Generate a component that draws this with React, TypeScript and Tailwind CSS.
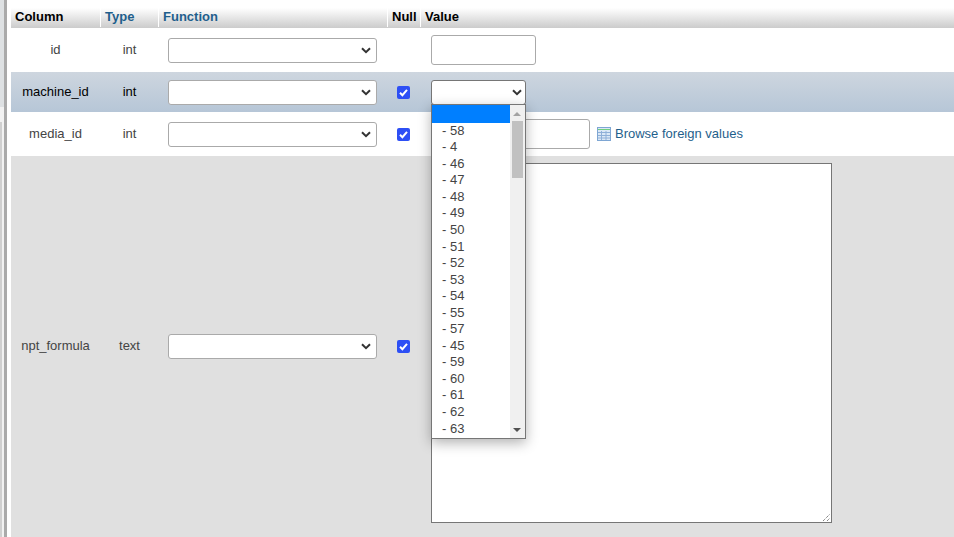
import React from "react";

const fn = "h-[25px] w-[209px] rounded-[3px] border border-[#aaaaaa] bg-white";

function Chevron({ className }: { className: string }) {
  return (
    <svg viewBox="0 0 10 7" className={className}>
      <path d="M1 1.2 5 5.2 9 1.2" fill="none" stroke="#333" strokeWidth="2" />
    </svg>
  );
}

function FakeSelect() {
  return (
    <div className={fn + " flex items-center justify-end pr-[5px]"}>
      <Chevron className="h-[7px] w-[10px]" />
    </div>
  );
}

function Check() {
  return (
    <div className="flex h-[13px] w-[13px] items-center justify-center rounded-[2px] bg-[#2d4ff5]">
      <svg viewBox="0 0 13 13" className="h-[13px] w-[13px]">
        <path d="M3 6.8 5.4 9.2 10 3.9" fill="none" stroke="#fff" strokeWidth="2" />
      </svg>
    </div>
  );
}

function Row({
  name,
  type,
  rowClass,
  nameClass,
  nul,
  children,
}: {
  name: string;
  type: string;
  rowClass: string;
  nameClass?: string;
  nul?: boolean;
  children?: React.ReactNode;
}) {
  return (
    <div className={"flex items-center " + rowClass}>
      <div className={"w-[89px] text-center " + (nameClass || "text-[#444444]")}>{name}</div>
      <div className={"w-[59px] text-center " + (nameClass || "text-[#444444]")}>{type}</div>
      <div className="w-[229px] pl-[9px]">
        <FakeSelect />
      </div>
      <div className="flex w-[33px] justify-center pr-[2px]">{nul && <Check />}</div>
      <div className="flex items-center pl-[10px]">{children}</div>
    </div>
  );
}

const options = ["58", "4", "46", "47", "48", "49", "50", "51", "52", "53", "54", "55", "57", "45", "59", "60", "61", "62", "63"];

export default function App() {
  return (
    <div className="relative flex h-[537px] w-[954px] overflow-hidden bg-white font-['Liberation_Sans',sans-serif] text-[13px]">
      <div className="flex w-[11px] shrink-0">
        <div className="flex w-[4px] flex-col">
          <div className="h-[107px] bg-[#dee1e3]" />
          <div className="h-[15px] bg-[#f2f2f2]" />
          <div className="flex flex-1">
            <div className="w-[2px] bg-[#d0d0d0]" />
            <div className="w-[2px] bg-[#f2f2f2]" />
          </div>
        </div>
        <div className="w-[3px] bg-[#aaaaaa]" />
      </div>
      <div className="flex-1 pt-[8px]">
        <div className="flex h-[20px] items-center bg-gradient-to-b from-[#ffffff] to-[#cccccc] pb-[2px] font-bold">
          <div className="flex h-[20px] w-[90px] items-center border-r border-white pl-[4px] text-black">Column</div>
          <div className="flex h-[20px] w-[58px] items-center border-r border-white pl-[4px] text-[#1f5f8c]">Type</div>
          <div className="flex h-[20px] w-[229px] items-center border-r border-white pl-[4px] text-[#1f5f8c]">Function</div>
          <div className="flex h-[20px] w-[33px] items-center border-r border-white pl-[4px] text-black">Null</div>
          <div className="pl-[4px] text-black">Value</div>
        </div>
        <Row name="id" type="int" rowClass="h-[44px] bg-white">
          <div className="h-[30px] w-[105px] rounded-[3px] border border-[#aaaaaa] bg-white" />
        </Row>
        <Row
          name="machine_id"
          type="int"
          rowClass="h-[40px] bg-gradient-to-b from-[#ced6df] to-[#b6c6d7]"
          nameClass="text-black"
          nul
        >
          <div className="flex h-[25px] w-[95px] items-center justify-end rounded-[3px] border border-[#767676] bg-white pr-[3px]">
            <Chevron className="h-[7px] w-[10px]" />
          </div>
        </Row>
        <Row name="media_id" type="int" rowClass="h-[44px] bg-white" nul>
          <div className="h-[30px] w-[159px] rounded-[3px] border border-[#aaaaaa] bg-white" />
          <svg viewBox="0 0 14 14" className="ml-[7px] h-[14px] w-[14px]">
            <rect x="0.5" y="0.5" width="13" height="13" fill="#dbe8f6" stroke="#7ea6d3" />
            <path d="M1 2.5H13" stroke="#6fcf7f" strokeWidth="1" />
            <path d="M1 5.5H13M1 8.5H13M1 11H13M4.5 4V13M9 4V13" stroke="#8fb0d8" strokeWidth="1" />
          </svg>
          <span className="ml-[4px] text-[#1f5f8c]">Browse foreign values</span>
        </Row>
        <Row name="npt_formula" type="text" rowClass="h-[381px] bg-[#e0e0e0]" nameClass="mb-[2px] text-[#444444]" nul>
          <div className="relative mb-[8px] h-[360px] w-[401px] border border-[#767676] bg-white">
            <svg viewBox="0 0 9 9" className="absolute bottom-0 right-0 h-[9px] w-[9px]">
              <path d="M1 8 8 1M5 8 8 5" stroke="#555" strokeWidth="1" strokeDasharray="1 1" fill="none" />
            </svg>
          </div>
        </Row>
      </div>

      <div className="absolute left-[431px] top-[104px] flex h-[335px] w-[95px] border border-[#767676] bg-white shadow-[0_4px_12px_rgba(0,0,0,0.3)]">
        <div className="flex-1">
          <div className="h-[17.7px] bg-[#007fff]" />
          {options.map((o) => (
            <div key={o} className="h-[16.55px] pl-[10px] leading-[16.55px] text-[#444444]">
              - {o}
            </div>
          ))}
        </div>
        <div className="relative w-[15px] bg-[#f0f0f0]">
          <div className="absolute left-[2px] top-[16px] h-[57px] w-[11px] bg-[#c1c1c1]" />
          <div className="absolute left-[3px] top-[7px] h-0 w-0 border-x-[4px] border-b-[4px] border-x-transparent border-b-[#a3a3a3]" />
          <div className="absolute bottom-[6px] left-[3px] h-0 w-0 border-x-[4px] border-t-[4px] border-x-transparent border-t-[#505050]" />
        </div>
      </div>
    </div>
  );
}
